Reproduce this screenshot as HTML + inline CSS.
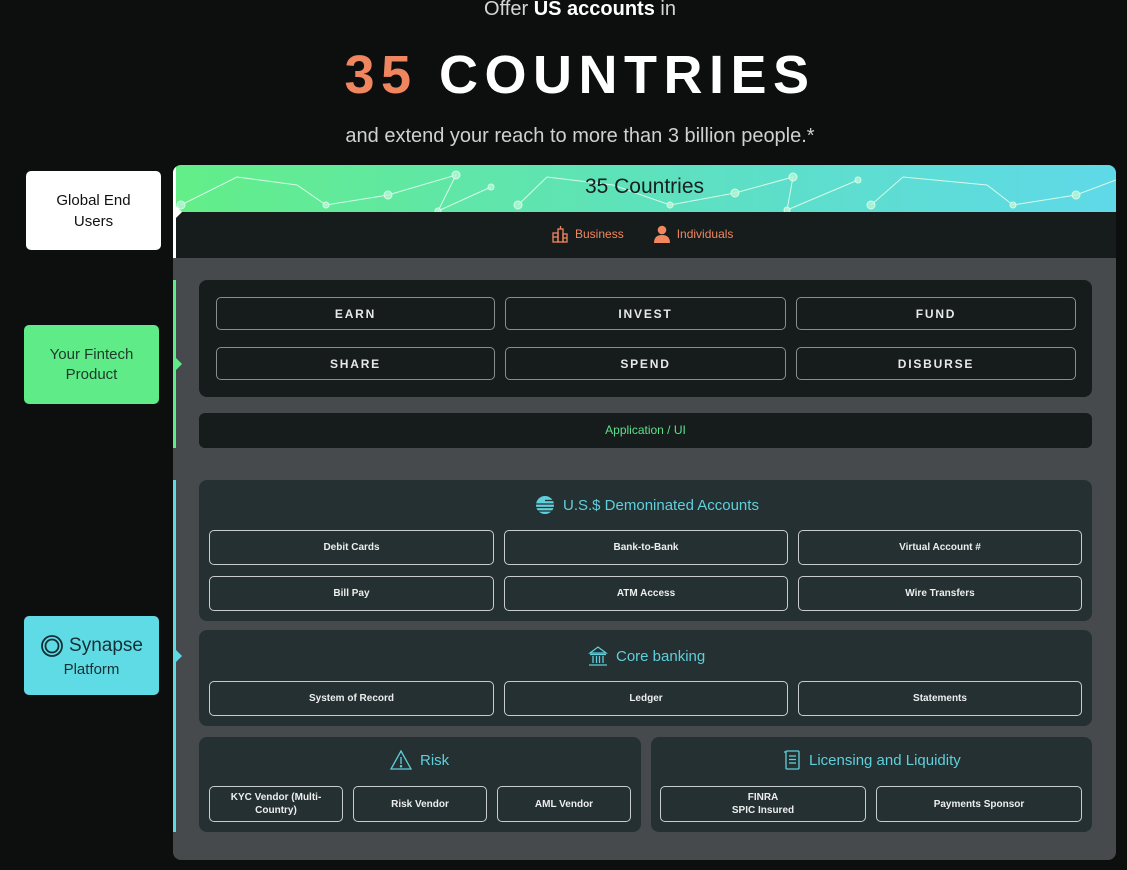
<!DOCTYPE html>
<html><head><meta charset="utf-8"><style>
*{margin:0;padding:0;box-sizing:border-box}
body{width:1127px;height:870px;background:#0d0f0f;position:relative;overflow:hidden;font-family:"Liberation Sans",sans-serif;color:#fff}
.a{position:absolute}
.c{text-align:center}
.box{position:absolute;border-radius:5px;display:flex;align-items:center;justify-content:center;text-align:center}
.b1{position:absolute;border:1.5px solid #8a8d8f;border-radius:5px;display:flex;align-items:center;justify-content:center;font-size:12px;font-weight:bold;letter-spacing:1.8px;color:#e8e8e8;background:#161b1c}
.b2{position:absolute;border:1.5px solid #c9cccc;border-radius:5px;display:flex;align-items:center;justify-content:center;font-size:10px;font-weight:bold;color:#eee;text-align:center;line-height:13px}
.card{position:absolute;border-radius:8px;background:#243031}
.t{position:absolute;color:#5fcfdc;font-size:15px;display:flex;align-items:center;gap:8px}
</style></head><body>
<div class="a c" style="left:0;width:1160px;top:-2px;font-size:20px;color:#d5d5d5">Offer <b style="color:#fff">US accounts</b> in</div>
<div class="a c" style="left:0;width:1160px;top:44px;font-size:54px;font-weight:bold;letter-spacing:6.5px;line-height:62px"><span style="color:#f0865f">35</span> COUNTRIES</div>
<div class="a c" style="left:0;width:1160px;top:125px;font-size:20px;color:#d0d0d0">and extend your reach to more than 3 billion people.*</div>

<div class="a" style="left:173px;top:165px;width:943px;height:695px;background:#464a4d;border-radius:8px;overflow:hidden">
 <div class="a" style="left:0;top:0;width:943px;height:47px;background:linear-gradient(90deg,#63ee88,#5ddfc6 60%,#5fd9e8)">
  <svg class="a" width="943" height="47" style="left:0;top:0" fill="#b5f5d5" stroke="#d6fbe8" stroke-width="1" fill-opacity=".8">
   <polyline fill="none" points="8,40 64,12 124,20 153,40 215,30 283,10 265,46 318,22" />
   <polyline fill="none" points="345,40 374,12 440,20 497,40 562,28 620,12 614,45 685,15"/>
   <polyline fill="none" points="698,40 730,12 814,20 840,40 903,30 943,15"/>
   <circle cx="8" cy="40" r="4"/><circle cx="153" cy="40" r="3"/><circle cx="215" cy="30" r="4"/><circle cx="283" cy="10" r="4"/><circle cx="265" cy="46" r="3"/><circle cx="318" cy="22" r="3"/><circle cx="345" cy="40" r="4"/><circle cx="497" cy="40" r="3"/><circle cx="562" cy="28" r="4"/><circle cx="620" cy="12" r="4"/><circle cx="614" cy="45" r="3"/><circle cx="685" cy="15" r="3"/><circle cx="698" cy="40" r="4"/><circle cx="840" cy="40" r="3"/><circle cx="903" cy="30" r="4"/>
  </svg>
  <div class="a c" style="left:0;width:943px;top:10px;font-size:21px;color:#142020">35 Countries</div>
 </div>
 <div class="a" style="left:0;top:47px;width:943px;height:46px;background:#161b1c"></div>
 <div class="a" style="left:0;top:0;width:3px;height:93px;background:#fff"></div>
 <div class="a" style="left:0;top:115px;width:3px;height:168px;background:#60eb89"></div>
 <div class="a" style="left:0;top:315px;width:3px;height:352px;background:#5fd9e5"></div>
 <div class="a" style="left:3px;top:41px;width:0;height:0;border-top:6px solid transparent;border-bottom:6px solid transparent;border-left:6px solid #fff"></div>
 <div class="a" style="left:3px;top:193px;width:0;height:0;border-top:6px solid transparent;border-bottom:6px solid transparent;border-left:6px solid #60eb89"></div>
 <div class="a" style="left:3px;top:485px;width:0;height:0;border-top:6px solid transparent;border-bottom:6px solid transparent;border-left:6px solid #5fd9e5"></div>
</div>
<div class="a" style="left:552px;top:225px;color:#f0875f;font-size:12px;display:flex;align-items:center">
 <svg width="16" height="18" viewBox="0 0 16 18" fill="none" stroke="#f0875f" stroke-width="1.3"><rect x="1" y="8" width="5" height="9"/><rect x="6" y="4" width="5" height="13"/><rect x="11" y="9" width="4" height="8"/><line x1="8.5" y1="1" x2="8.5" y2="4"/><line x1="1" y1="12" x2="6" y2="12"/><line x1="11" y1="13" x2="15" y2="13"/></svg>
 <span style="margin-left:7px">Business</span>
 <svg style="margin-left:29px" width="18" height="18" viewBox="0 0 18 18" fill="#f0875f"><circle cx="9" cy="5" r="4.3"/><path d="M1 18 Q1 10 9 10 Q17 10 17 18Z"/></svg>
 <span style="margin-left:6px">Individuals</span>
</div>

<div class="box" style="left:26px;top:171px;width:135px;height:79px;background:#fff;color:#111;font-size:15px;line-height:21px">Global End<br>Users</div>
<div class="box" style="left:24px;top:325px;width:135px;height:79px;background:#60eb89;color:#1d3a2a;font-size:15px;line-height:20px">Your Fintech<br>Product</div>
<div class="box" style="left:24px;top:616px;width:135px;height:79px;background:#5fdbe5;color:#153035;flex-direction:column">
 <div style="display:flex;align-items:center;gap:5px;font-size:19px"><svg width="24" height="24" viewBox="0 0 24 24" fill="none" stroke="#153035" stroke-width="1.8"><circle cx="12" cy="12" r="10"/><circle cx="12" cy="12" r="6.5"/></svg>Synapse</div>
 <div style="font-size:15px;margin-top:3px">Platform</div>
</div>

<div class="a" style="left:199px;top:280px;width:893px;height:117px;background:#161b1c;border-radius:8px"></div>
<div class="b1" style="left:216px;top:297px;width:279px;height:33px">EARN</div>
<div class="b1" style="left:505px;top:297px;width:281px;height:33px">INVEST</div>
<div class="b1" style="left:796px;top:297px;width:280px;height:33px">FUND</div>
<div class="b1" style="left:216px;top:347px;width:279px;height:33px">SHARE</div>
<div class="b1" style="left:505px;top:347px;width:281px;height:33px">SPEND</div>
<div class="b1" style="left:796px;top:347px;width:280px;height:33px">DISBURSE</div>
<div class="a c" style="left:199px;top:413px;width:893px;height:35px;background:#161b1c;border-radius:6px;color:#5de08a;font-size:12px;line-height:35px">Application / UI</div>

<div class="card" style="left:199px;top:480px;width:893px;height:141px"></div>
<div class="t" style="left:535px;top:495px"><svg width="20" height="20" viewBox="0 0 20 20"><circle cx="10" cy="10" r="9" fill="#5fcfdc"/><g stroke="#243031" stroke-width="1.3"><line x1="1" y1="9" x2="19" y2="9"/><line x1="1" y1="12.5" x2="19" y2="12.5"/><line x1="2" y1="16" x2="18" y2="16"/><line x1="10" y1="5.5" x2="19" y2="5.5"/></g></svg>U.S.$ Demoninated Accounts</div>
<div class="b2" style="left:209px;top:530px;width:285px;height:35px">Debit Cards</div>
<div class="b2" style="left:504px;top:530px;width:284px;height:35px">Bank-to-Bank</div>
<div class="b2" style="left:798px;top:530px;width:284px;height:35px">Virtual Account #</div>
<div class="b2" style="left:209px;top:576px;width:285px;height:35px">Bill Pay</div>
<div class="b2" style="left:504px;top:576px;width:284px;height:35px">ATM Access</div>
<div class="b2" style="left:798px;top:576px;width:284px;height:35px">Wire Transfers</div>

<div class="card" style="left:199px;top:630px;width:893px;height:96px"></div>
<div class="t" style="left:588px;top:645px"><svg width="20" height="22" viewBox="0 0 20 22" fill="none" stroke="#5fcfdc" stroke-width="1.3"><path d="M2 8 L10 2 L18 8Z"/><line x1="2" y1="9.5" x2="18" y2="9.5"/><line x1="5" y1="11" x2="5" y2="18"/><line x1="8.5" y1="11" x2="8.5" y2="18"/><line x1="11.5" y1="11" x2="11.5" y2="18"/><line x1="15" y1="11" x2="15" y2="18"/><line x1="1" y1="20" x2="19" y2="20"/></svg>Core banking</div>
<div class="b2" style="left:209px;top:681px;width:285px;height:35px">System of Record</div>
<div class="b2" style="left:504px;top:681px;width:284px;height:35px">Ledger</div>
<div class="b2" style="left:798px;top:681px;width:284px;height:35px">Statements</div>

<div class="card" style="left:199px;top:737px;width:442px;height:95px"></div>
<div class="card" style="left:651px;top:737px;width:441px;height:95px"></div>
<div class="t" style="left:390px;top:750px"><svg width="22" height="20" viewBox="0 0 22 20" fill="none" stroke="#5fcfdc" stroke-width="1.3"><path d="M11 1 L21 19 L1 19Z"/><line x1="11" y1="7" x2="11" y2="14"/><circle cx="11" cy="16.3" r=".6"/></svg>Risk</div>
<div class="t" style="left:783px;top:750px"><svg width="18" height="20" viewBox="0 0 18 20" fill="none" stroke="#5fcfdc" stroke-width="1.3"><rect x="3" y="1" width="13" height="18" rx="1"/><path d="M1 2 L3 2"/><line x1="6" y1="6" x2="13" y2="6"/><line x1="6" y1="9.5" x2="13" y2="9.5"/><line x1="6" y1="13" x2="13" y2="13"/></svg>Licensing and Liquidity</div>
<div class="b2" style="left:209px;top:786px;width:134px;height:36px">KYC Vendor (Multi-<br>Country)</div>
<div class="b2" style="left:353px;top:786px;width:134px;height:36px">Risk Vendor</div>
<div class="b2" style="left:497px;top:786px;width:134px;height:36px">AML Vendor</div>
<div class="b2" style="left:660px;top:786px;width:206px;height:36px">FINRA<br>SPIC Insured</div>
<div class="b2" style="left:876px;top:786px;width:206px;height:36px">Payments Sponsor</div>
</body></html>
